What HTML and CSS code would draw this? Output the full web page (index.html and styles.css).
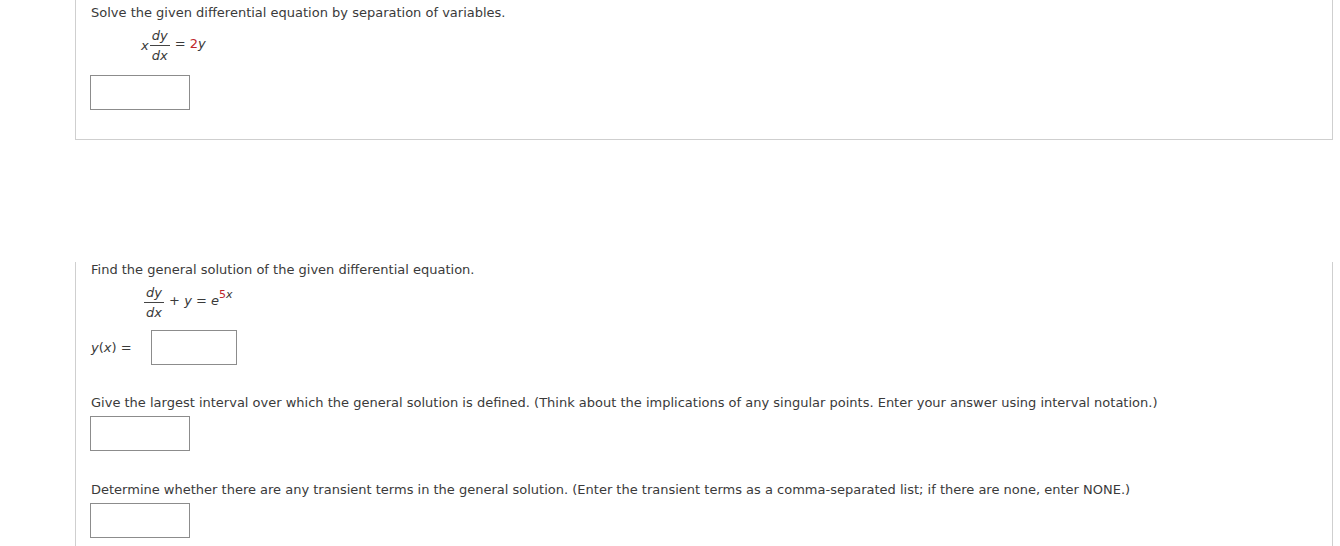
FILE: index.html
```html
<!DOCTYPE html>
<html>
<head>
<meta charset="utf-8">
<link rel="stylesheet" href="styles.css">
</head>
<body>
<div class="card card-first">
  <p class="prompt">Solve the given differential equation by separation of variables.</p>
  <div class="eq eq-first">
    <span class="var">x</span><span class="frac"><span class="num">dy</span><span class="den">dx</span></span><span class="rest"> = <span class="red">2</span><span class="var">y</span></span>
  </div>
  <div class="answer"></div>
</div>
<div class="gap"></div>
<div class="card card-second">
  <p class="prompt">Find the general solution of the given differential equation.</p>
  <div class="eq eq-second">
    <span class="frac"><span class="num">dy</span><span class="den">dx</span></span><span class="rest"> + <span class="var">y</span> = <span class="var">e</span><sup class="sup"><span class="red">5</span><span class="var">x</span></sup></span>
  </div>
  <div class="labeled">
    <span class="label"><span class="var">y</span>(<span class="var">x</span>) = </span>
    <div class="answer answer-narrow"></div>
  </div>
  <p class="prompt prompt-interval">Give the largest interval over which the general solution is defined. (Think about the implications of any singular points. Enter your answer using interval notation.)</p>
  <div class="answer"></div>
  <p class="prompt prompt-transient">Determine whether there are any transient terms in the general solution. (Enter the transient terms as a comma-separated list; if there are none, enter NONE.)</p>
  <div class="answer"></div>
</div>
</body>
</html>
```
FILE: styles.css
```css
html, body {
  margin: 0;
  padding: 0;
  background: #fff;
}
body {
  font-family: "DejaVu Sans", Verdana, sans-serif;
  font-size: 13px;
  color: #3a3a3a;
  width: 1340px;
  height: 546px;
  overflow: hidden;
}
.card {
  margin-left: 75px;
  border-left: 1px solid #cfcfcf;
  border-right: 1px solid #cfcfcf;
  padding-left: 14px;
  box-sizing: border-box;
  width: 1258px;
}
.card-first {
  border-bottom: 1px solid #cfcfcf;
  height: 140px;
  padding-top: 5px;
}
.gap {
  height: 122px;
}
.card-second {
  padding-top: 0;
  height: 300px;
}
.prompt {
  margin: 0;
  line-height: 16px;
  padding-left: 1px;
}
.eq {
  display: flex;
  align-items: center;
  font-size: 13px;
  line-height: 13px;
}
.eq-first {
  margin-left: 51px;
  margin-top: 8px;
}
.eq-second {
  margin-left: 53px;
  margin-top: 8px;
}
.var {
  font-style: italic;
}
.red {
  color: #c0262b;
}
.frac {
  display: inline-flex;
  flex-direction: column;
  align-items: center;
  padding: 0 1px;
}
.num {
  padding: 0 2px 3px;
  border-bottom: 1px solid #444;
  font-style: italic;
}
.den {
  padding: 3px 2px 0;
  font-style: italic;
}
.rest {
  white-space: pre;
  margin-top: -4px;
}
.sup {
  font-size: 11px;
  vertical-align: 7px;
  line-height: 0;
}
.answer {
  width: 100px;
  height: 35px;
  box-sizing: border-box;
  border: 1px solid #8c8c8c;
  background: #fff;
}
.card-first .answer {
  margin-top: 13px;
}
.labeled {
  display: flex;
  align-items: center;
  margin-top: 11px;
}
.label {
  white-space: pre;
  width: 61px;
  padding-left: 1px;
  box-sizing: border-box;
  flex-shrink: 0;
}
.answer-narrow {
  width: 86px;
}
.prompt-interval {
  margin-top: 30px;
  margin-bottom: 5px;
}
.prompt-transient {
  margin-top: 31px;
  margin-bottom: 5px;
}
```
